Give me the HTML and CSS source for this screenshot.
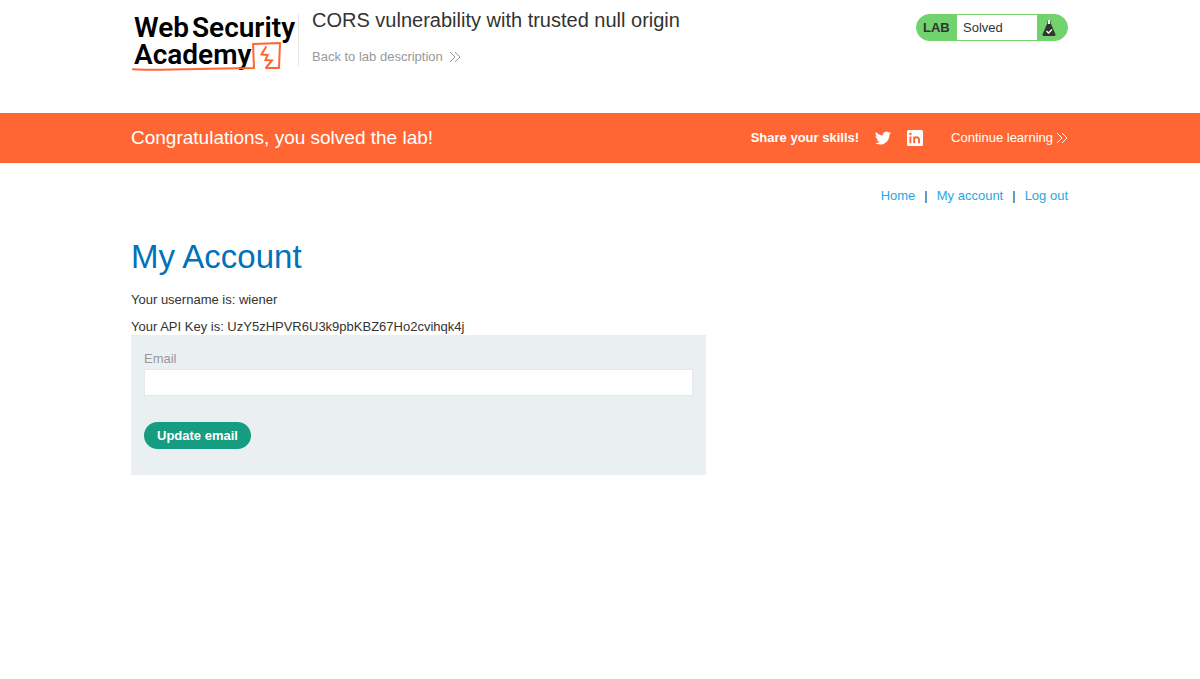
FILE: index.html
```html
<!DOCTYPE html>
<html lang="en">
<head>
<meta charset="utf-8">
<title>CORS vulnerability with trusted null origin</title>
<meta name="viewport" content="width=device-width, initial-scale=1">
<link rel="stylesheet" href="styles.css">
</head>
<body>
<header class="lab-header container">
  <a class="logo" href="#" aria-label="Web Security Academy">
    <span class="logo-line"><span>Web</span><span>Security</span></span>
    <span class="logo-line">Academy</span>
    <svg class="logo-mark" viewBox="0 0 152 32" fill="none" stroke="#ff6633" stroke-width="2" stroke-linejoin="round" stroke-linecap="round" aria-hidden="true">
      <path d="M1 29.300C25 31 80 28 122 28L121 4L148 3L147 28L134 28"/>
      <path d="M134 7L129.500 14.500L135.500 15L133.500 20L140 20.500L134.500 27" stroke-linejoin="miter"/>
    </svg>
  </a>
  <div class="lab-title">
    <h2>CORS vulnerability with trusted null origin</h2>
    <a class="back" href="#">Back to lab description
      <svg class="chevrons" viewBox="0 0 12 12" aria-hidden="true"><path d="M1 1L6 6L1 11M6 1L11 6L6 11"/></svg>
    </a>
  </div>
  <div class="lab-status">
    <span class="status-tag">LAB</span>
    <span class="status-text">Solved</span>
    <span class="status-icon">
      <svg width="14" height="18" viewBox="0 0 14 18" aria-hidden="true">
        <path d="M4.500 1L5.500 2V6H8.500V2L9.500 1" fill="#eefbed" stroke="#333332" stroke-width=".7"/>
        <path d="M5 5H9L13.500 15.500Q13.500 17 12 17H2Q.5 17 .5 15.500Z" fill="#333332"/>
        <path d="M4.500 12L6.500 14L10 10.500" fill="none" stroke="#fff" stroke-width="1.300"/>
      </svg>
    </span>
  </div>
</header>
<section class="banner">
  <div class="container banner-row">
    <h4>Congratulations, you solved the lab!</h4>
    <div class="share">
      <span class="share-label">Share your skills!</span>
      <a href="#" aria-label="Twitter">
        <svg width="16" height="16" viewBox="0 0 24 24" fill="#fff"><path d="M24 4.560a9.800 9.800 0 0 1-2.830.780 4.930 4.930 0 0 0 2.170-2.720 9.900 9.900 0 0 1-3.130 1.190 4.920 4.920 0 0 0-8.380 4.480A13.980 13.980 0 0 1 1.670 3.150a4.920 4.920 0 0 0 1.520 6.570 4.900 4.900 0 0 1-2.230-.62c-.05 2.280 1.580 4.420 3.950 4.890a4.940 4.940 0 0 1-2.220.08 4.930 4.930 0 0 0 4.600 3.420A9.900 9.900 0 0 1 0 19.540a13.940 13.940 0 0 0 7.550 2.210c9.140 0 14.310-7.720 14-14.640A10 10 0 0 0 24 4.560z"/></svg>
      </a>
      <a href="#" aria-label="LinkedIn">
        <svg width="16" height="16" viewBox="0 0 16 16"><rect width="16" height="16" rx="1.500" fill="#fff"/><path d="M3.400 6.500V13.200M7.200 6.500V13.200M7.200 9.500Q7.500 7.200 9.600 7.200Q12 7.200 12 9.800V13.200" fill="none" stroke="#ff6633" stroke-width="1.900"/><circle cx="3.400" cy="3.900" r="1.250" fill="#ff6633"/></svg>
      </a>
    </div>
    <a class="continue" href="#">Continue learning
      <svg class="chevrons" viewBox="0 0 12 12" aria-hidden="true"><path d="M1 1L6 6L1 11M6 1L11 6L6 11"/></svg>
    </a>
  </div>
</section>
<main class="container">
  <nav class="top-links">
    <a href="#">Home</a><span>|</span><a href="#">My account</a><span>|</span><a href="#">Log out</a>
  </nav>
  <h1>My Account</h1>
  <p>Your username is: wiener</p>
  <p>Your API Key is: UzY5zHPVR6U3k9pbKBZ67Ho2cvihqk4j</p>
  <form class="email-form">
    <label for="email">Email</label>
    <input id="email" type="email" name="email">
    <button type="submit">Update email</button>
  </form>
</main>
</body>
</html>
```
FILE: styles.css
```css
* {
  box-sizing: border-box;
}

body {
  margin: 0;
  background: #fff;
  color: #333332;
  font: 13px/18px "Liberation Sans", Arial, sans-serif;
}

h1, h2, h4, p {
  margin: 0;
  font-weight: 400;
}

a {
  text-decoration: none;
}

.container {
  width: 100%;
  max-width: 938px;
  margin: 0 auto;
  padding-right: 1px;
}

.lab-header {
  display: flex;
  align-items: flex-start;
  padding-top: 8px;
  padding-bottom: 40px;
}

.logo {
  position: relative;
  width: 167px;
  height: 65px;
  padding: 6px 0 0 3px;
  color: #000;
  font: 600 28px/27px Roboto, Lato, sans-serif;
}

.logo-line {
  display: flex;
  gap: 3px;
}

.logo-mark {
  position: absolute;
  left: 1px;
  top: 32px;
  width: 152px;
  height: 32px;
}

.lab-title {
  flex: 1;
  min-height: 52px;
  margin-top: 6px;
  border-left: 1px solid #e8e8e8;
  padding-left: 13px;
}

.lab-title h2 {
  margin-top: -6px;
  font-size: 20px;
  line-height: 24px;
}

.back,
.continue {
  display: inline-flex;
  align-items: center;
  gap: 6px;
}

.back {
  margin-top: 16px;
  color: #999;
}

.chevrons {
  width: 12px;
  height: 12px;
  fill: none;
  stroke: currentColor;
  stroke-width: 1;
}

.lab-status {
  display: flex;
  height: 27px;
  margin-top: 6px;
  border: 1px solid #70d36d;
  border-radius: 14px;
  overflow: hidden;
  background: #70d36d;
  line-height: 26px;
}

.status-tag {
  width: 40px;
  padding-left: 6px;
  font-weight: 700;
}

.status-text {
  width: 80px;
  padding-left: 6px;
  background: #fff;
}

.status-icon {
  display: flex;
  width: 30px;
  align-items: center;
  padding-left: 5px;
}

.banner {
  background: #ff6633;
  color: #fff;
}

.banner a {
  color: #fff;
}

.banner-row {
  display: flex;
  align-items: center;
  min-height: 50px;
}

.banner h4 {
  flex: 1;
  font-size: 19px;
  line-height: 24px;
}

.share {
  display: flex;
  align-items: center;
  gap: 16px;
  margin-right: 28px;
}

.share a {
  display: flex;
}

.share-label {
  font-weight: 700;
}

.continue {
  gap: 3px;
}

.top-links {
  display: flex;
  justify-content: flex-end;
  gap: 9px;
  padding-top: 24px;
}

.top-links a {
  color: #29a7df;
}

h1 {
  margin: 32px 0 15px;
  color: #0071bc;
  font-size: 33px;
  line-height: 40px;
}

p {
  margin-bottom: 11px;
  line-height: 16px;
}

p + p {
  margin-bottom: 0;
}

.email-form {
  display: flex;
  flex-direction: column;
  align-items: flex-start;
  max-width: 575px;
  padding: 15px 13px 26px;
  background: #eaeff2;
}

label {
  color: #999;
}

.email-form input {
  width: 100%;
  height: 27px;
  margin: 1px 0 26px;
  border: 1px solid #e6e9e9;
  padding: 0 8px;
  background: #fff;
  font: inherit;
}

.email-form button {
  height: 27px;
  border: 0;
  border-radius: 14px;
  padding: 0 13px;
  background: #169c80;
  color: #fff;
  font: 700 13px/27px "Liberation Sans", Arial, sans-serif;
}
```
